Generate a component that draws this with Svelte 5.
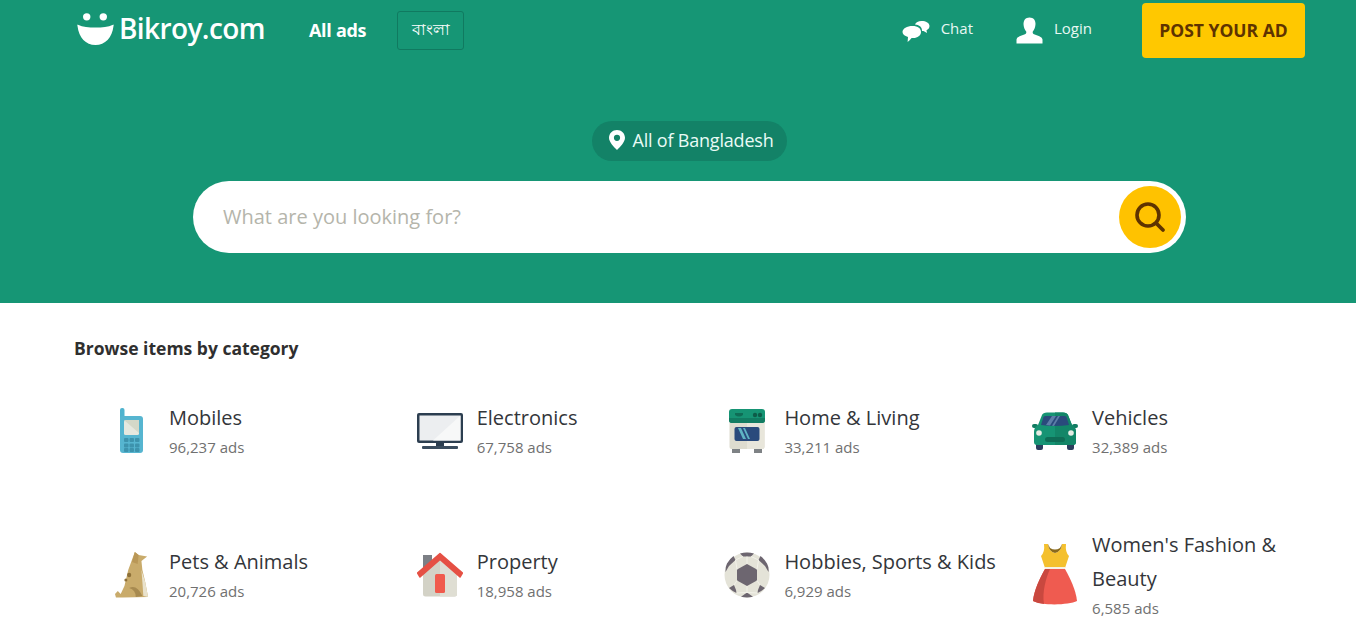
<script>
	const categories = [
		{ name: 'Mobiles', ads: '96,237 ads', icon: 'phone' },
		{ name: 'Electronics', ads: '67,758 ads', icon: 'tv' },
		{ name: 'Home & Living', ads: '33,211 ads', icon: 'stove' },
		{ name: 'Vehicles', ads: '32,389 ads', icon: 'car' },
		{ name: 'Pets & Animals', ads: '20,726 ads', icon: 'dog' },
		{ name: 'Property', ads: '18,958 ads', icon: 'house' },
		{ name: 'Hobbies, Sports & Kids', ads: '6,929 ads', icon: 'ball' },
		{ name: "Women's Fashion & Beauty", ads: '6,585 ads', icon: 'dress' }
	];
</script>

<div class="page">
	<header class="hero">
		<nav class="nav">
			<a class="logo" href="#top">
				<svg width="37" height="35" viewBox="0 0 38 35" aria-hidden="true">
					<circle cx="10" cy="4.5" r="3.8" fill="#fff" />
					<circle cx="27" cy="4.5" r="3.8" fill="#fff" />
					<path d="M1 12.5 Q0 12 0.5 14 C2 26 9 33.5 19 33.5 C29 33.5 36 26 37.5 14 Q38 12 37 12.5 C32 15 26 15.5 19 15.5 C12 15.5 6 15 1 12.5 Z" fill="#fff" />
				</svg>
				<span>Bikroy.com</span>
			</a>
			<a class="all-ads" href="#top">All ads</a>
			<a class="lang" href="#top">বাংলা</a>
			<div class="spacer"></div>
			<a class="nav-link chat" href="#top">
				<svg width="28" height="23" viewBox="0 0.5 28 22" aria-hidden="true">
					<path d="M19.5 1 C24 1 27.5 3 27.5 6 C27.5 8.2 26 9.5 24.5 10.3 L25 13 L21.5 11 C21 11 20.5 11.1 20 11 C20.3 7 17 4.8 13 4.5 C13.8 2.3 16.3 1 19.5 1 Z" fill="#fff" />
					<path d="M10.5 6 C16 6 19 8.6 19 12 C19 15.6 15.4 18 11.5 18 C10.8 18 10.2 18 9.6 17.9 C8.4 19.6 7 21 5.6 22 L6 17 C2.6 16 0.5 14.2 0.5 12 C0.5 8.6 5 6 10.5 6 Z" fill="#fff" />
				</svg>
				<span>Chat</span>
			</a>
			<a class="nav-link login" href="#top">
				<svg width="27" height="27" viewBox="0 0 27 27" aria-hidden="true">
					<path d="M13.5 0.5 C17.5 0.5 19.5 3.3 19.5 7 C19.5 10.3 18 13 16.8 14.6 C16.5 15.8 16.7 16.6 18 17.3 C21.5 18.8 26 19.5 26.5 22.5 L26.5 26.5 L0.5 26.5 L0.5 22.5 C1 19.5 5.5 18.8 9 17.3 C10.3 16.6 10.5 15.8 10.2 14.6 C9 13 7.5 10.3 7.5 7 C7.5 3.3 9.5 0.5 13.5 0.5 Z" fill="#fff" />
				</svg>
				<span>Login</span>
			</a>
			<a class="post" href="#top">POST YOUR AD</a>
		</nav>

		<button class="location" type="button">
			<svg width="16" height="20" viewBox="0 0 16 20" aria-hidden="true">
				<path fill-rule="evenodd" d="M8 0 C12.4 0 16 3.4 16 7.7 C16 12 11 17 8 20 C5 17 0 12 0 7.7 C0 3.4 3.6 0 8 0 Z M8 4.7 A3.1 3.1 0 1 0 8 10.9 A3.1 3.1 0 1 0 8 4.7 Z" fill="#fff" />
			</svg>
			<span>All of Bangladesh</span>
		</button>

		<div class="search">
			<span class="placeholder">What are you looking for?</span>
			<span class="search-btn">
				<svg width="32" height="32" viewBox="0 0 32 32" aria-hidden="true">
					<circle cx="14" cy="14" r="11" fill="none" stroke="#5e3300" stroke-width="3.6" />
					<path d="M22.5 22.5 L29 29" stroke="#5e3300" stroke-width="3.8" stroke-linecap="round" />
				</svg>
			</span>
		</div>
	</header>

	<main class="browse">
		<h2>Browse items by category</h2>
		<ul class="grid">
			{#each categories as cat}
				<li class="item">
					<span class="icon">
						{#if cat.icon === 'phone'}
							<svg width="26" height="46" viewBox="2 0 26 46">
								<rect x="3" y="0" width="4.5" height="12" rx="2" fill="#4fb3ce" />
								<rect x="3" y="8" width="23" height="37" rx="3" fill="#56b5d0" />
								<rect x="7" y="12" width="15" height="15" rx="1.5" fill="#e6e8df" />
								<path d="M7 12 H22 V25 Z" fill="#d4d8c8" />
								{#each [30, 35.5, 40] as y}
									{#each [7, 12.5, 18] as x}
										<rect {x} {y} width="4.5" height="4" rx="1" fill="#3d93ad" />
									{/each}
								{/each}
							</svg>
						{:else if cat.icon === 'tv'}
							<svg width="46" height="38" viewBox="0 0 46 38">
								<rect x="0" y="1" width="46" height="30" rx="2" fill="#2c3e50" />
								<rect x="2.5" y="3.5" width="41" height="25" fill="#eceef0" />
								<path d="M43.5 3.5 V28.5 H16 Z" fill="#f7f8f8" />
								<rect x="19" y="31" width="8" height="3" fill="#2c3e50" />
								<rect x="5" y="34" width="36" height="3" rx="1" fill="#3a4c5e" />
							</svg>
						{:else if cat.icon === 'stove'}
							<svg width="38" height="46" viewBox="0 0 38 46">
								<rect x="4" y="40" width="8" height="5" fill="#7e8285" />
								<rect x="26" y="40" width="8" height="5" fill="#7e8285" />
								<rect x="1.5" y="12" width="35" height="29" rx="2" fill="#dedccf" />
								<path d="M19 12 H36.5 V39 Q36.5 41 34 41 H19 Z" fill="#e8e6db" />
								<rect x="1" y="1" width="36" height="14" rx="3" fill="#169474" />
								<path d="M1 10 H37 V12 Q37 15 34 15 H4 Q1 15 1 12 Z" fill="#127c62" />
								<circle cx="27" cy="7" r="2.2" fill="#0e5c49" />
								<circle cx="32" cy="7" r="2.2" fill="#0e5c49" />
								<path d="M7 5 H15 V7 Q11 10 7 7 Z" fill="#0f6d56" />
								<rect x="6.5" y="19" width="25" height="14" rx="2" fill="#2a4a7c" />
								<path d="M10 20 L13 20 L18 31 L15 31 Z" fill="#5fb4c4" />
								<path d="M15 20 L17 20 L22 31 L20 31 Z" fill="#5fb4c4" />
							</svg>
						{:else if cat.icon === 'car'}
							<svg width="46" height="38" viewBox="0 0 46 38">
								<rect x="4" y="29" width="7" height="9" rx="2" fill="#2c3e5e" />
								<rect x="35" y="29" width="7" height="9" rx="2" fill="#2c3e5e" />
								<rect x="0" y="12" width="6" height="4" rx="2" fill="#127c62" />
								<rect x="40" y="12" width="6" height="4" rx="2" fill="#127c62" />
								<path d="M10 3 Q11 0.5 15 0.5 H31 Q35 0.5 36 3 L40 13 Q44 15 44 20 V30 Q44 33 41 33 H5 Q2 33 2 30 V20 Q2 15 6 13 Z" fill="#169474" />
								<path d="M23 0.5 H31 Q35 0.5 36 3 L40 13 Q44 15 44 20 V30 Q44 33 41 33 H23 Z" fill="#138668" />
								<path d="M11.5 5 Q12 4 14 4 H32 Q34 4 34.5 5 L37 13 Q23 15 9 13 Z" fill="#2a4a7c" />
								<path d="M14 13 L20 4 H24 L18 13.6 Z" fill="#5d7ea8" />
								<path d="M20 13.8 L26 4 H28 L22 13.9 Z" fill="#5d7ea8" />
								<circle cx="7" cy="21" r="2.8" fill="#e6ece4" />
								<circle cx="39" cy="21" r="2.8" fill="#e6ece4" />
								<rect x="13" y="25" width="20" height="5" rx="2.5" fill="#0f6d56" />
							</svg>
						{:else if cat.icon === 'dog'}
							<svg width="34" height="46" viewBox="0 0 36 46" preserveAspectRatio="none">
								<path d="M21 0 L25 3 L34 4.5 L28 9 L29 18 L32 30 L35 45 L8 45.5 L1 45.5 L0 42 L3 39 L6 42 L10 34 L14 18 Z" fill="#c9ab6b" />
								<path d="M28 18 L32 30 L35 45 L30 44 L29 30 Z" fill="#e9e2cc" />
								<path d="M15 36 Q23 32 29 44 L22 45 Q22 38 15 36 Z" fill="#a78a50" />
								<circle cx="15" cy="23" r="2.2" fill="#8d7038" />
								<circle cx="11.5" cy="28" r="1.6" fill="#8d7038" />
								<path d="M21 0 L25 3 L24 12 L18 10 Z" fill="#b99757" />
							</svg>
						{:else if cat.icon === 'house'}
							<svg width="46" height="46" viewBox="0 0 46 46">
								<rect x="6" y="3" width="9" height="18" fill="#7c7f85" />
								<path d="M6 20 L23 5 L40 20 V42 Q40 44.5 37.5 44.5 H8.5 Q6 44.5 6 42 Z" fill="#d3d2c6" />
								<path d="M23 5 L40 20 V42 Q40 44.5 37.5 44.5 H23 Z" fill="#dfded3" />
								<path d="M0.5 21 L23 1.5 L45.5 21 L43 25 L23 7.5 L3 25 Z" fill="#e55044" stroke="#e55044" stroke-linejoin="round" stroke-width="1.5" />
								<rect x="18" y="22" width="10" height="19" rx="1.5" fill="#f05a4c" />
							</svg>
						{:else if cat.icon === 'ball'}
							<svg width="46" height="46" viewBox="0 0 46 46">
								<circle cx="23" cy="23" r="22.5" fill="#e4e3d8" />
								<path d="M23 12 L33 17.5 V28.5 L23 34 L13 28.5 V17.5 Z" fill="#6d6670" />
								<path d="M16 1.5 Q23 -0.5 30 1.5 L27 4.5 H19 Z" fill="#6d6670" />
								<path d="M3 11.5 Q5.5 7 9.5 4 L11.5 8 L5 14 L1.5 20 Q1 15 3 11.5 Z" fill="#6d6670" />
								<path d="M43 11.5 Q40.5 7 36.5 4 L34.5 8 L41 14 L44.5 20 Q45 15 43 11.5 Z" fill="#6d6670" />
								<path d="M5 36 L10 33 L12 38 L12.5 41 Q8 39 5 36 Z" fill="#6d6670" />
								<path d="M41 36 L36 33 L34 38 L33.5 41 Q38 39 41 36 Z" fill="#6d6670" />
								<path d="M17 44.8 L23 40.5 L29 44.8 Q23 46 17 44.8 Z" fill="#6d6670" />
								<path d="M19 4.5 L11.5 8 M27 4.5 L34.5 8 M23 4.5 V12 M11.5 8 L13 17.5 M34.5 8 L33 17.5 M13 28.5 L10 33 M33 28.5 L36 33 M23 34 V40.5 M12.5 41 L23 40.5 M33.5 41 L23 40.5" stroke="#f3f2ea" stroke-width="1" />
							</svg>
						{:else}
							<svg width="44" height="62" viewBox="0 0 44 62">
								<path d="M11 0 H15 Q16 8 22 9 Q28 8 29 0 H33 Q32 8 36 12 L32 24 H12 L8 12 Q12 8 11 0 Z" fill="#f4c02e" />
								<path d="M15 0 Q16 8 22 9 Q28 8 29 0 L27 4 Q22 7 17 4 Z" fill="#8a6a1c" />
								<rect x="12" y="23" width="20" height="2" fill="#f5f1e4" />
								<path d="M12 25 H32 C37 34 43 46 44 57 C36 61 10 62 0 57 C1 46 7 34 12 25 Z" fill="#ef5b50" />
								<path d="M12 25 H17 C13 34 9 48 11 60 C7 59.5 3 58.5 0 57 C1 46 7 34 12 25 Z" fill="#c9483f" />
							</svg>
						{/if}
					</span>
					<span class="text">
						<span class="name">{cat.name}</span>
						<span class="ads">{cat.ads}</span>
					</span>
				</li>
			{/each}
		</ul>
	</main>
</div>

<style>
	:global(body) {
		margin: 0;
		background: #fff;
		font-family: 'Open Sans', 'Noto Sans', sans-serif;
	}

	a {
		color: inherit;
		text-decoration: none;
	}

	.page {
		height: 628px;
		overflow: hidden;
	}

	.hero {
		height: 303px;
		background: #169675;
		display: flex;
		flex-direction: column;
		align-items: center;
		color: #fff;
	}

	.nav {
		align-self: stretch;
		display: flex;
		align-items: center;
		height: 55px;
		margin-top: 3px;
		padding: 0 51px 0 77px;
	}

	.logo {
		display: flex;
		align-items: center;
		gap: 5px;
		width: 232px;
		margin-top: -2px;
		font-size: 28px;
		font-weight: 600;
		letter-spacing: -0.6px;
	}

	.logo span {
		margin-bottom: 3px;
	}

	.all-ads {
		width: 88px;
		font-size: 18px;
		font-weight: 700;
		letter-spacing: -0.3px;
		margin-bottom: 1px;
	}

	.lang {
		width: 67px;
		height: 39px;
		margin-bottom: 1px;
		padding-top: 1px;
		box-sizing: border-box;
		display: flex;
		align-items: center;
		justify-content: center;
		border: 1px solid #107a60;
		border-radius: 3px;
		font-size: 15.5px;
	}

	.spacer {
		flex: 1;
	}

	.nav-link {
		display: flex;
		align-items: center;
		font-size: 15px;
		color: #e8f8f3;
	}

	.nav-link span {
		margin-bottom: 5px;
	}

	.chat {
		gap: 11px;
		margin-right: 43px;
	}

	.chat svg {
		margin-top: 2px;
	}

	.login {
		gap: 11px;
		margin-right: 50px;
	}

	.post {
		width: 163px;
		height: 55px;
		padding-bottom: 2px;
		box-sizing: border-box;
		display: flex;
		align-items: center;
		justify-content: center;
		background: #ffc800;
		border-radius: 4px;
		color: #5e3300;
		font-size: 17.5px;
		font-weight: 700;
	}

	.location {
		display: flex;
		align-items: center;
		gap: 7px;
		height: 40px;
		margin-top: 63px;
		margin-left: 23px;
		padding: 0 13px 2px 17px;
		border: none;
		border-radius: 20px;
		background: #138267;
		color: #eafbf6;
		font-family: inherit;
		font-size: 18px;
		letter-spacing: -0.2px;
	}

	.search {
		width: 993px;
		height: 72px;
		margin-top: 20px;
		margin-left: 23px;
		box-sizing: border-box;
		padding: 5px 5px 5px 30px;
		display: flex;
		align-items: center;
		justify-content: space-between;
		background: #fff;
		border-radius: 36px;
	}

	.placeholder {
		color: #b5b5ab;
		font-size: 20px;
		margin-bottom: 2px;
	}

	.search-btn {
		width: 62px;
		height: 62px;
		display: flex;
		align-items: center;
		justify-content: center;
		background: #ffc200;
		border-radius: 50%;
	}

	.browse {
		padding: 34px 0 0 74px;
		color: #2f2f2f;
	}

	h2 {
		margin: 0;
		font-size: 17.5px;
		line-height: 22px;
		font-weight: 700;
	}

	.grid {
		list-style: none;
		margin: -2px 0 0 18px;
		padding: 0;
		display: grid;
		grid-template-columns: repeat(4, 307.7px);
		grid-auto-rows: 144px;
	}

	.item {
		display: flex;
		align-items: center;
	}

	.icon {
		flex: none;
		width: 77px;
		padding: 4px 0 0 3px;
		box-sizing: border-box;
		display: flex;
		justify-content: center;
	}

	.icon svg {
		display: block;
	}

	.text {
		display: flex;
		flex-direction: column;
		width: 215px;
	}

	.name {
		font-size: 20px;
		line-height: 34px;
		color: #33363a;
	}

	.ads {
		margin-top: 1px;
		font-size: 15px;
		line-height: 22px;
		color: #707070;
	}
</style>
